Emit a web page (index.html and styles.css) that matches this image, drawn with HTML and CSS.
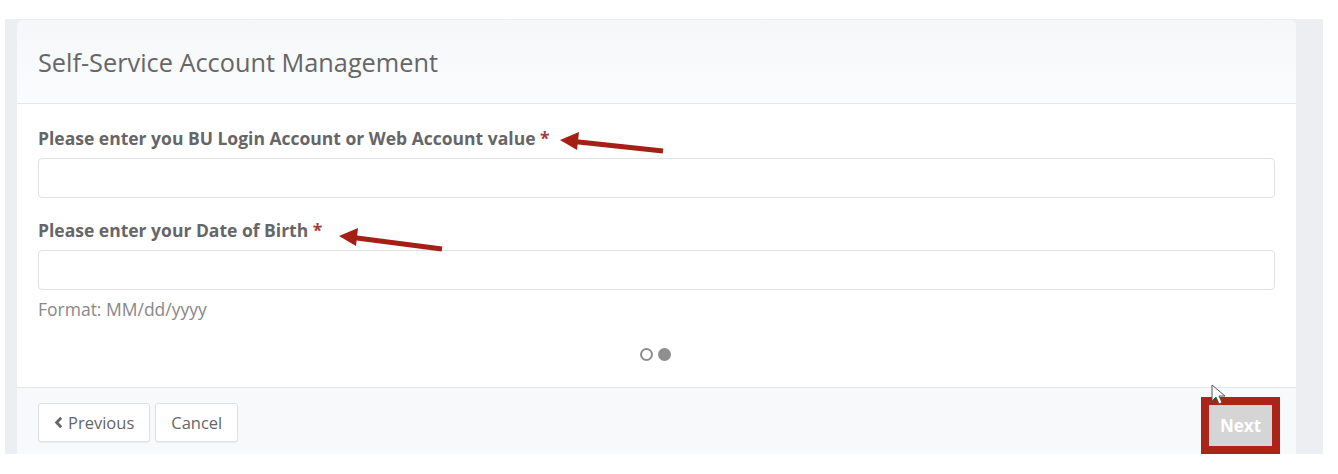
FILE: index.html
```html
<!DOCTYPE html>
<html lang="en">
<head>
    <meta charset="UTF-8">
    <title>Self-Service Account Management</title>
    <link rel="stylesheet" href="styles.css">
</head>
<body>
    <div class="page">
        <div class="card">
            <div class="card-header">
                <h1>Self-Service Account Management</h1>
            </div>
            <div class="card-body">
                <div class="field">
                    <label class="field-label">Please enter you BU Login Account or Web Account value <span class="req">*</span></label>
                    <input type="text" class="field-input">
                </div>
                <div class="field">
                    <label class="field-label">Please enter your Date of Birth <span class="req">*</span></label>
                    <input type="text" class="field-input">
                    <div class="hint">Format: MM/dd/yyyy</div>
                </div>
                <div class="steps">
                    <span class="dot"></span>
                    <span class="dot active"></span>
                </div>
            </div>
            <div class="card-footer">
                <div class="btn-group">
                    <button class="btn">
                        <svg class="chev" width="9" height="13" viewBox="0 0 9 13"><path d="M7.2 1.8 L2.6 6.5 L7.2 11.2" fill="none" stroke="#666" stroke-width="2.8"/></svg>
                        Previous
                    </button>
                    <button class="btn">Cancel</button>
                </div>
                <div class="next-wrap">
                    <button class="btn-next">Next</button>
                </div>
            </div>
        </div>

        <!-- annotation arrows -->
        <svg class="annotations" width="1338" height="474" viewBox="0 0 1338 474">
            <g fill="#a61f17" stroke="#a61f17">
                <line x1="663" y1="151" x2="574" y2="141.5" stroke-width="5"/>
                <polygon points="560,140 579,132 577,150" stroke="none"/>
                <line x1="442" y1="249" x2="353" y2="237.5" stroke-width="5"/>
                <polygon points="339,236 358,228 356,246" stroke="none"/>
            </g>
            <path d="M1212 385 L1212 401 L1216 397 L1219 404 L1222 402.5 L1219 396 L1225 396 Z" fill="#fff" stroke="#555" stroke-width="1"/>
        </svg>
    </div>
</body>
</html>
```

FILE: styles.css
```css
body {
    margin: 0;
    padding: 0;
    background: #fff;
    font-family: "Open Sans", Arial, sans-serif;
    color: #666;
}
.page {
    position: relative;
    width: 1338px;
    height: 474px;
    padding-top: 19px;
    box-sizing: border-box;
}
.card {
    margin-left: 5px;
    width: 1318px;
    box-sizing: border-box;
    background: #eceef2;
    padding: 1px 27px 0 12px;
    height: 435px;
    display: flex;
    flex-direction: column;
}
.card-header {
    background: linear-gradient(to bottom, #f5f7f9, #fbfcfd);
    border-bottom: 1px solid #e3e6ea;
    border-radius: 6px 6px 0 0;
    height: 83px;
    padding: 0 21px;
    display: flex;
    align-items: center;
}
.card-header h1 {
    margin: 0;
    font-size: 25.3px;
    font-weight: 400;
    color: #666;
    padding-top: 2px;
}
.card-body {
    background: #fff;
    padding: 22px 21px 0 21px;
    height: 286px;
    box-sizing: border-box;
    border-bottom: 1px solid #e3e6ea;
}
.field {
    margin-bottom: 20px;
}
.field-label {
    display: block;
    font-size: 17.5px;
    font-weight: 700;
    color: #666;
    line-height: 24px;
    margin-bottom: 8px;
}
.req {
    color: #a93c38;
}
.field-input {
    display: block;
    width: 100%;
    box-sizing: border-box;
    height: 40px;
    border: 1px solid #e2e2e2;
    border-radius: 4px;
    background: #fff;
    margin: 0;
}
.hint {
    font-size: 17.5px;
    color: #888;
    margin-top: 7px;
    line-height: 24px;
}
.steps {
    display: flex;
    justify-content: center;
    gap: 5px;
    margin-top: 27px;
    padding-right: 2px;
}
.dot {
    width: 9px;
    height: 9px;
    border-radius: 50%;
    border: 2.5px solid #8f8f8f;
    background: #fff;
}
.dot.active {
    background: #8f8f8f;
}
.card-footer {
    background: #f8f9fb;
    flex: 1;
    display: flex;
    justify-content: space-between;
    align-items: flex-start;
    padding: 15px 16px 0 21px;
}
.btn-group {
    display: flex;
    gap: 5px;
}
.btn {
    font-family: "Open Sans", Arial, sans-serif;
    font-size: 16.5px;
    color: #666;
    background: #fff;
    border: 1px solid #e0e0e0;
    border-radius: 3px;
    height: 39px;
    padding: 0 15px;
    box-shadow: 0 1px 1px rgba(0, 0, 0, 0.05);
    display: flex;
    align-items: center;
    gap: 5px;
}
.next-wrap {
    margin-top: -6px;
    border: 8px solid #ab2419;
    display: flex;
}
.btn-next {
    font-family: "Open Sans", Arial, sans-serif;
    font-size: 17px;
    font-weight: 700;
    color: #fff;
    background: #d5d5d5;
    border: none;
    width: 63px;
    height: 41px;
    padding: 0;
}
.annotations {
    position: absolute;
    left: 0;
    top: 0;
    pointer-events: none;
}
```
